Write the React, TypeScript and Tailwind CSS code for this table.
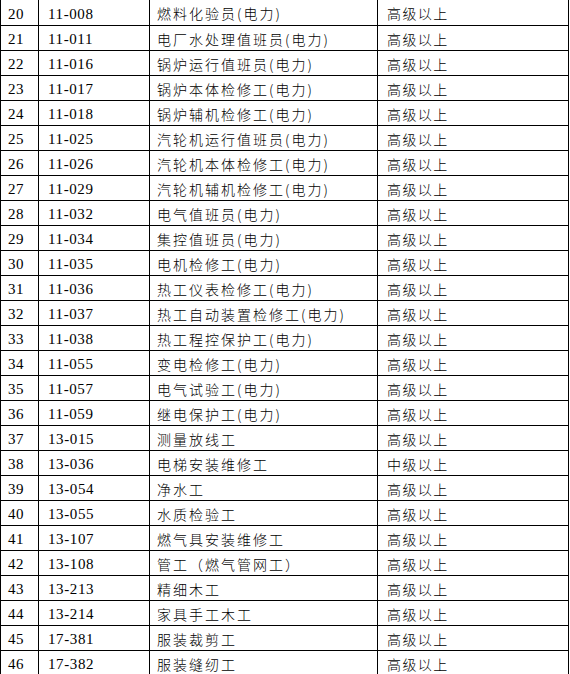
import React from "react";

const rows: [string, string, string, string][] = [
  ["20", "11-008", "燃料化验员(电力)", "高级以上"],
  ["21", "11-011", "电厂水处理值班员(电力)", "高级以上"],
  ["22", "11-016", "锅炉运行值班员(电力)", "高级以上"],
  ["23", "11-017", "锅炉本体检修工(电力)", "高级以上"],
  ["24", "11-018", "锅炉辅机检修工(电力)", "高级以上"],
  ["25", "11-025", "汽轮机运行值班员(电力)", "高级以上"],
  ["26", "11-026", "汽轮机本体检修工(电力)", "高级以上"],
  ["27", "11-029", "汽轮机辅机检修工(电力)", "高级以上"],
  ["28", "11-032", "电气值班员(电力)", "高级以上"],
  ["29", "11-034", "集控值班员(电力)", "高级以上"],
  ["30", "11-035", "电机检修工(电力)", "高级以上"],
  ["31", "11-036", "热工仪表检修工(电力)", "高级以上"],
  ["32", "11-037", "热工自动装置检修工(电力)", "高级以上"],
  ["33", "11-038", "热工程控保护工(电力)", "高级以上"],
  ["34", "11-055", "变电检修工(电力)", "高级以上"],
  ["35", "11-057", "电气试验工(电力)", "高级以上"],
  ["36", "11-059", "继电保护工(电力)", "高级以上"],
  ["37", "13-015", "测量放线工", "高级以上"],
  ["38", "13-036", "电梯安装维修工", "中级以上"],
  ["39", "13-054", "净水工", "高级以上"],
  ["40", "13-055", "水质检验工", "高级以上"],
  ["41", "13-107", "燃气具安装维修工", "高级以上"],
  ["42", "13-108", "管工（燃气管网工）", "高级以上"],
  ["43", "13-213", "精细木工", "高级以上"],
  ["44", "13-214", "家具手工木工", "高级以上"],
  ["45", "17-381", "服装裁剪工", "高级以上"],
  ["46", "17-382", "服装缝纫工", "高级以上"],
];

export default function App() {
  return (
    <div className="w-[570px] h-[674px] overflow-hidden bg-white text-black">
      <div className="w-[569px]">
        {rows.map((r, i) => (
          <div
            key={r[0]}
            className={`grid grid-cols-[38px_111px_228px_192px] border-b border-black ${
              i === 0 ? "h-[26px]" : "h-[25px]"
            }`}
          >
            <div className="border-l border-black flex items-center pl-[7px] pt-[3px] text-[15px] leading-none tracking-[0.5px] font-['Liberation_Serif',serif]">
              {r[0]}
            </div>
            <div className="border-l border-black flex items-center pl-[9px] pt-[3px] text-[15px] leading-none tracking-[0.6px] font-['Liberation_Serif',serif]">
              {r[1]}
            </div>
            <div className="border-l border-black flex items-center pl-[7px] pt-[1px] text-[14px] leading-none tracking-[2px] font-light font-['Noto_Sans_CJK_SC',sans-serif]">
              {r[2]}
            </div>
            <div className="border-l border-r border-black flex items-center pl-[9px] pt-[1px] text-[14px] leading-none tracking-[1.4px] font-light font-['Noto_Sans_CJK_SC',sans-serif]">
              {r[3]}
            </div>
          </div>
        ))}
      </div>
    </div>
  );
}
